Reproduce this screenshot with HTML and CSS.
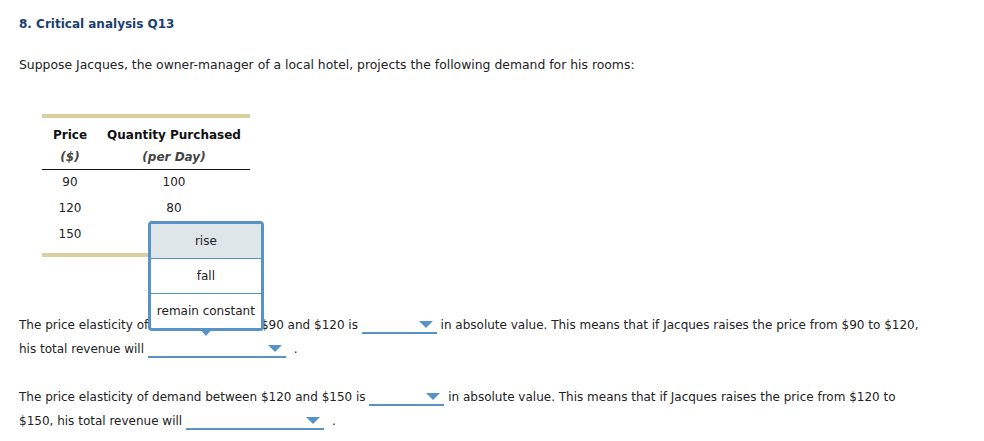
FILE: index.html
```html
<!DOCTYPE html>
<html>
<head>
<meta charset="utf-8">
<link rel="stylesheet" href="styles.css">
</head>
<body>
<div class="page">
  <h2 class="title">8. Critical analysis Q13</h2>
  <p class="intro">Suppose Jacques, the owner-manager of a local hotel, projects the following demand for his rooms:</p>
  <table class="demand">
    <thead>
      <tr class="h1"><th class="c1">Price</th><th class="c2">Quantity Purchased</th></tr>
      <tr class="h2"><th class="c1">($)</th><th class="c2">(per Day)</th></tr>
    </thead>
    <tbody>
      <tr><td class="c1">90</td><td class="c2">100</td></tr>
      <tr><td class="c1">120</td><td class="c2">80</td></tr>
      <tr class="last"><td class="c1">150</td><td class="c2">60</td></tr>
    </tbody>
  </table>
  <p class="q">The price elasticity of demand between $90 and $120 is <span class="dd short"></span> in absolute value. This means that if Jacques raises the price from $90 to $120, his total revenue will <span class="dd long open"><span class="menu"><span class="opt sel">rise</span><span class="opt">fall</span><span class="opt">remain constant</span></span></span><span class="end">.</span></p>
  <p class="q">The price elasticity of demand between $120 and $150 is <span class="dd short"></span> in absolute value. This means that if Jacques raises the price from $120 to $150, his total revenue will <span class="dd long"></span><span class="end">.</span></p>
</div>
</body>
</html>
```
FILE: styles.css
```css
html, body { margin: 0; padding: 0; background: #fff; }
body { font-family: "DejaVu Sans", Verdana, sans-serif; font-size: 12.4px; color: #222; }
.page { padding: 16px 19px 0 19px; width: 902px; }
.title { font-size: 12px; font-weight: bold; color: #1b3f6e; line-height: 16px; margin: 0; }
.intro { margin: 25px 0 0 0; line-height: 16px; }
.demand { border-collapse: collapse; margin: 41px 0 0 23px; width: 208px; border-top: 4px solid #d9cfa3; border-bottom: 4px solid #d9cfa3; font-size: 12px; }
.demand th, .demand td { padding: 0; line-height: 18px; text-align: center; }
.demand .c1 { width: 56px; }
.demand .c2 { width: 152px; }
.demand .h1 th { padding-top: 8px; font-weight: bold; color: #111; }
.demand .h2 th { padding-top: 4px; padding-bottom: 3px; font-style: italic; font-weight: bold; color: #444; border-bottom: 1px solid #111; }
.demand td { padding-top: 3px; padding-bottom: 5px; }
.demand tr.last td { padding-bottom: 10px; }
.q { margin: 56px 0 0 0; line-height: 24px; font-size: 12px; }
.q + .q { margin-top: 24px; }
.end { margin-left: 8px; }
.dd { display: inline-block; position: relative; height: 14px; border-bottom: 2px solid #5793c6; vertical-align: -5px; }
.dd.short { width: 75px; }
.dd.long { width: 138px; }
.dd::after { content: ""; position: absolute; right: 4px; top: 3px; border-left: 7px solid transparent; border-right: 7px solid transparent; border-top: 7px solid #5793c6; }
.menu { position: absolute; left: 0; bottom: 25px; width: 110px; border: 3px solid #5793c6; border-radius: 4px; background: #fff; display: flex; flex-direction: column; line-height: 16px; z-index: 5; }
.menu::after { content: ""; position: absolute; left: 50%; margin-left: -7px; top: 100%; border-left: 7px solid transparent; border-right: 7px solid transparent; border-top: 8px solid #5793c6; }
.opt { height: 34px; display: flex; align-items: center; justify-content: center; border-top: 1px solid #5793c6; color: #222; }
.opt:first-child { border-top: none; }
.opt.sel { background: #dfe6ea; }
```
